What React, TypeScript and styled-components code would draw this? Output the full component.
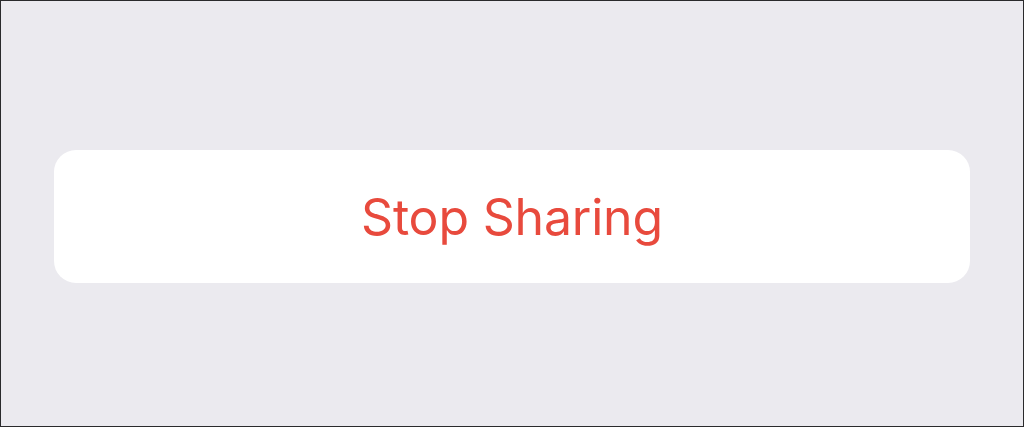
import styled, { createGlobalStyle } from 'styled-components';

const GlobalStyle = createGlobalStyle`
  html, body {
    margin: 0;
    padding: 0;
    background: #ebeaef;
  }
  * {
    box-sizing: border-box;
  }
`;

const Frame = styled.div`
  display: flex;
  flex-direction: column;
  width: 1024px;
  height: 427px;
  padding: 149px 53px 0;
  background: #ebeaef;
  border: 1px solid #2a2a2c;
`;

const ActionCard = styled.button`
  display: flex;
  align-items: center;
  justify-content: center;
  width: 100%;
  height: 133px;
  padding: 0;
  border: none;
  border-radius: 22px;
  background: #ffffff;
  cursor: pointer;
`;

const ActionLabel = styled.span<{ $tone: string }>`
  font-family: Inter, "Liberation Sans", sans-serif;
  font-size: 50px;
  font-weight: 400;
  letter-spacing: -0.2px;
  color: ${(p) => p.$tone};
  line-height: 1;
`;

const App: React.FC = () => {
  return (
    <>
      <GlobalStyle />
      <Frame>
        <ActionCard type="button">
          <ActionLabel $tone="#e84a3d">Stop Sharing</ActionLabel>
        </ActionCard>
      </Frame>
    </>
  );
};

export default App;
